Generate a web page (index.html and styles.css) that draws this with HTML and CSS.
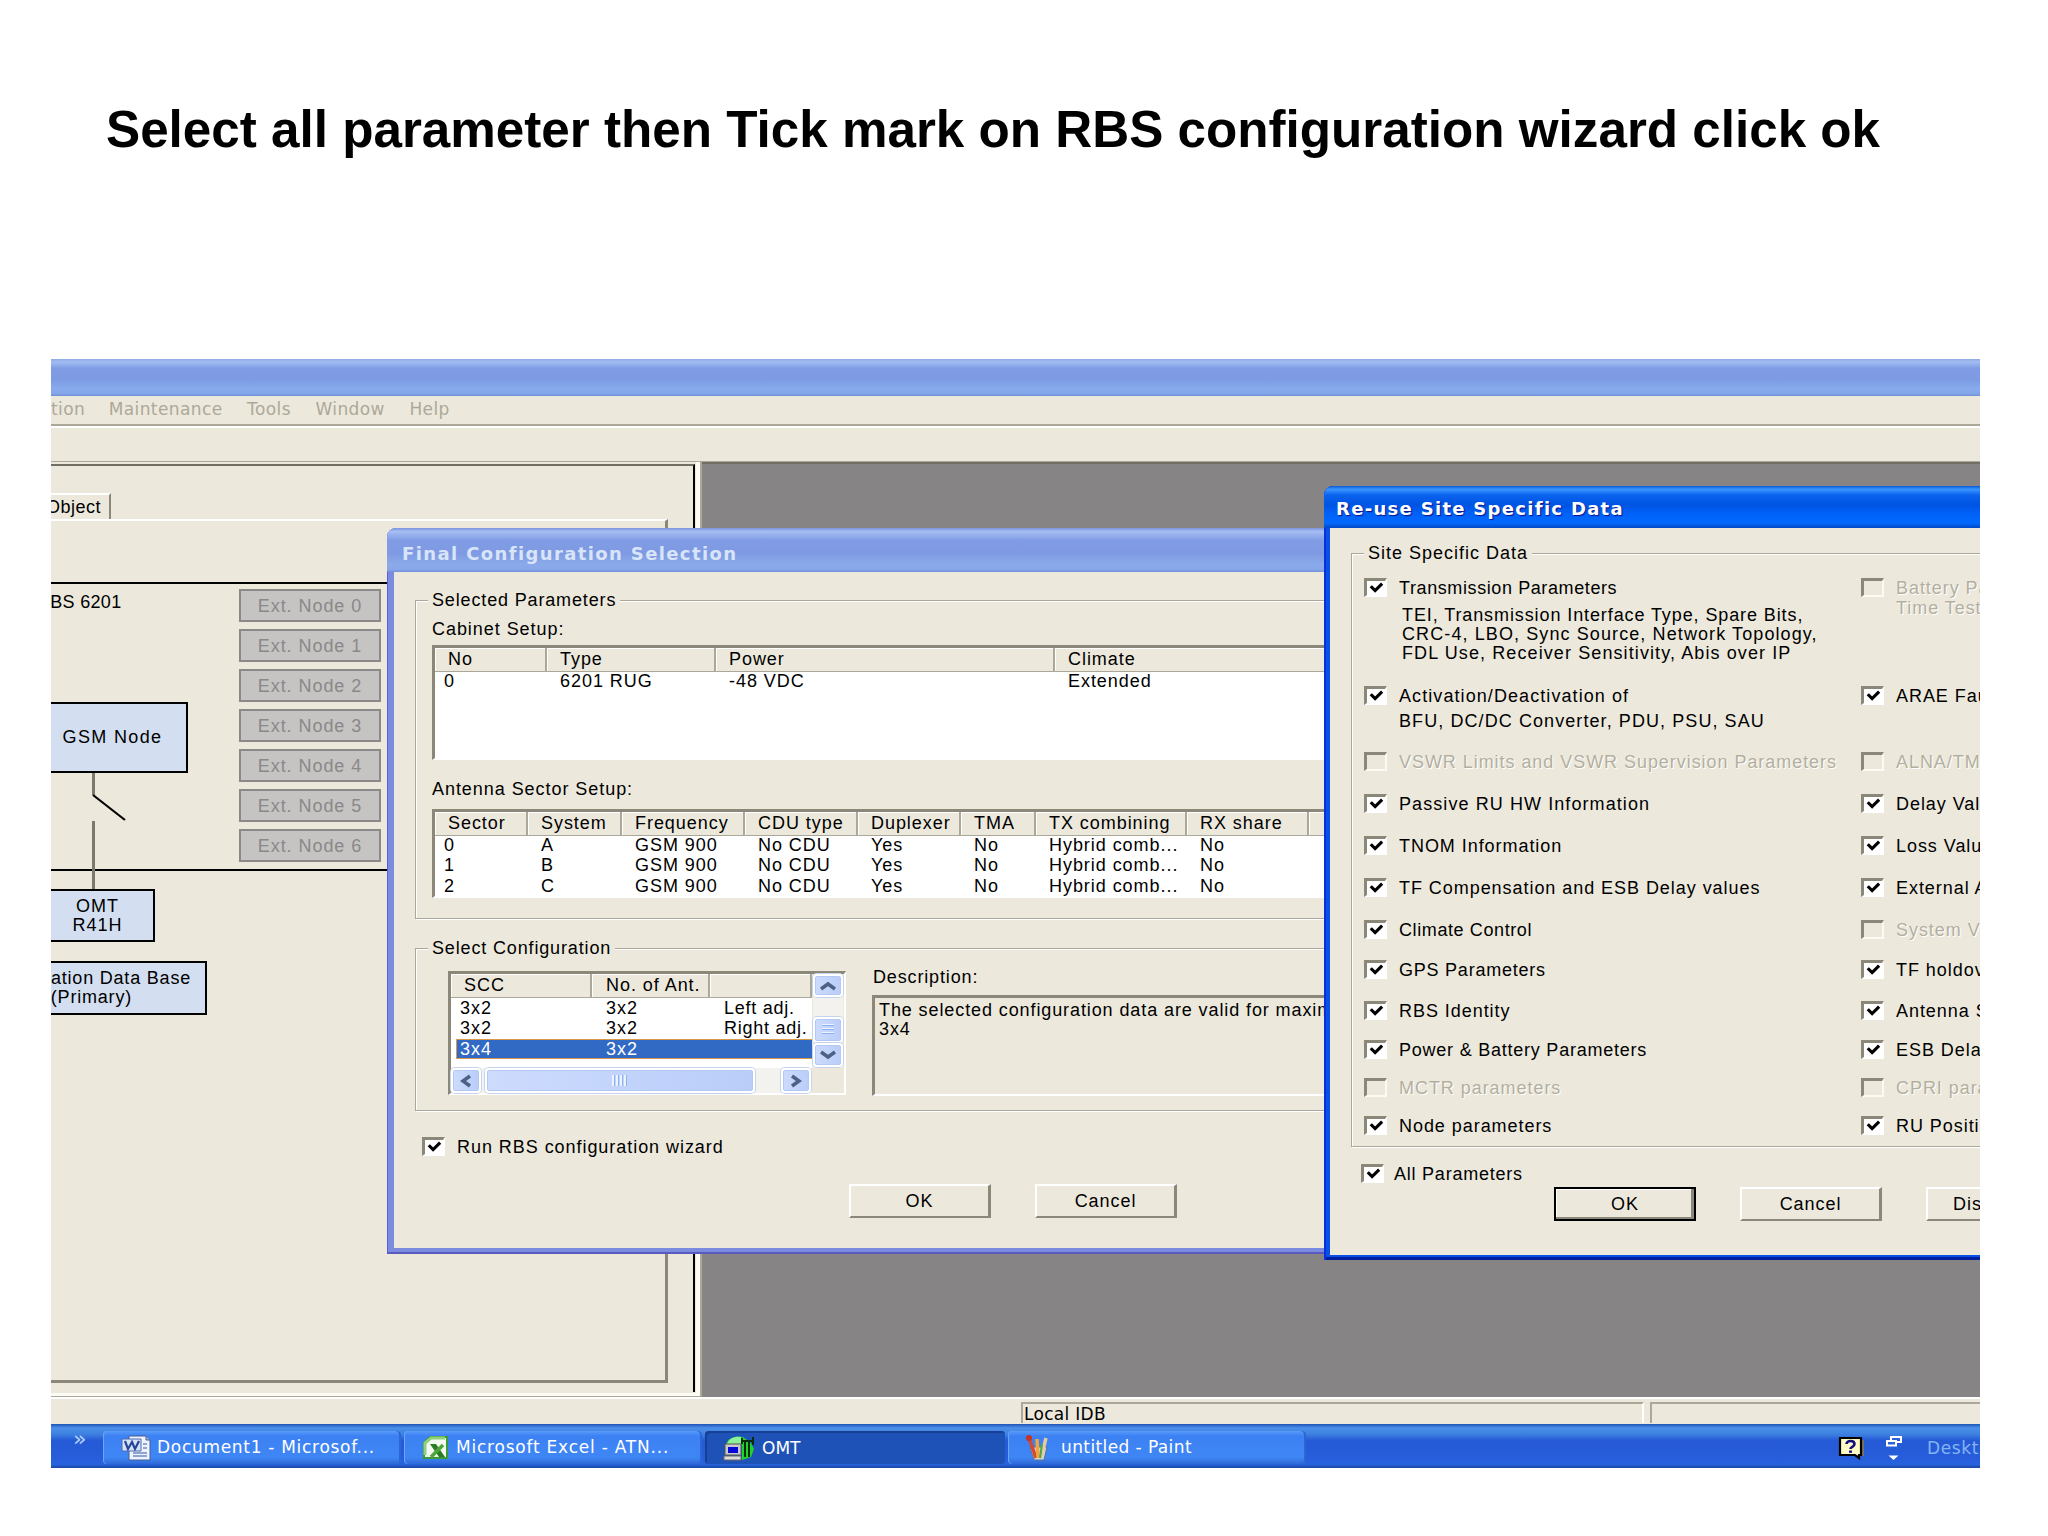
FILE: index.html
```
<!DOCTYPE html>
<html lang="en">

<head>
    <meta charset="UTF-8">
    <meta name="viewport" content="width=device-width, initial-scale=1.0">
    <title>RBS configuration wizard</title>
    <link rel="stylesheet" href="styles.css">
</head>

<body>
    <svg class="defs" width="0" height="0">
        <symbol id="tick" viewBox="0 0 20 16">
            <path d="M4 6l5 5 8-8" fill="none" stroke="#000" stroke-width="3.6" />
        </symbol>
    </svg>
    <h1>Select all parameter then Tick mark on RBS configuration wizard click ok</h1>
    <div class="screen">
        <div class="app-title"></div>
        <div class="menubar">
            <span>tion</span><span>Maintenance</span><span>Tools</span><span>Window</span><span>Help</span>
        </div>
        <div class="toolbar"></div>
        <div class="workspace">
            <div class="side">
                <div class="side-inner">
                    <div class="tab"><span>Object</span></div>
                    <div class="tab-page"></div>
                </div>
                <!-- node diagram -->
                <div class="diagram">
                    <div class="rack"></div>
                    <span class="rack-name">RBS 6201</span>
                    <div class="ext-nodes">
                        <div>Ext. Node 0</div>
                        <div>Ext. Node 1</div>
                        <div>Ext. Node 2</div>
                        <div>Ext. Node 3</div>
                        <div>Ext. Node 4</div>
                        <div>Ext. Node 5</div>
                        <div>Ext. Node 6</div>
                    </div>
                    <svg class="wire" width="60" height="120" viewBox="0 0 60 120">
                        <path d="M14.500 0V22M14.500 48V120" stroke="#7d796c" stroke-width="3" />
                        <path d="M14 22L46 47" stroke="#000" stroke-width="2.200" />
                    </svg>
                    <div class="node gsm">GSM Node</div>
                    <div class="node omt">OMT<br>R41H</div>
                    <div class="node idb">ation Data Base<br><span>(Primary)</span></div>
                </div>
            </div>
            <div class="mdi"></div>
        </div>
        <div class="statusbar">
            <div class="field">Local IDB</div>
            <div class="field last"></div>
        </div>
        <div class="taskbar">
            <span class="more">»</span>
            <div class="task">
                <svg width="30" height="26" viewBox="0 0 30 26">
                    <path d="M8 1h17l4 4v20H8z" fill="#eef3fb" stroke="#445f95" />
                    <path d="M25 1v4h4" fill="#9db4dc" stroke="#445f95" />
                    <path d="M22 9h4M22 13h4M12 18h14M12 21h14" stroke="#6f8cc4" stroke-width="1.500" />
                    <path d="M1 4h19v12H1z" fill="#d6e2f6" stroke="#4a6cb2" />
                    <path d="M4 6l3 8 4-7 3 7 4-8" fill="none" stroke="#24479b" stroke-width="2.200" />
                </svg>
                <span class="t-word">Document1 - Microsof...</span>
            </div>
            <div class="task">
                <svg width="28" height="26" viewBox="0 0 28 26">
                    <path d="M8 2h17v21H2V8z" fill="#f4faf0" stroke="#3a9a36" stroke-width="2" />
                    <path d="M3 20V8l6-5h14" fill="none" stroke="#8fd07a" stroke-width="3" />
                    <path d="M8 9h6l9 13h-6z" fill="#2b7d25" />
                    <path d="M21 10L9 22" stroke="#4ca63c" stroke-width="3.500" />
                </svg>
                <span class="t-excel">Microsoft Excel - ATN...</span>
            </div>
            <div class="task active">
                <svg width="33" height="26" viewBox="0 0 33 26">
                    <path d="M3 10C5 2 12 1 20 2l8 6 3 6-3 8-9 3V10z" fill="#1fd32c" />
                    <path d="M4 9C6 3 12 1 18 2v7z" fill="#8df09a" />
                    <path d="M2 9h16v11H2z" fill="#c9c9c9" stroke="#555" />
                    <path d="M5 12h10v6H5z" fill="#0707d8" />
                    <path d="M1 21h17v4H1z" fill="#dcdcdc" stroke="#666" />
                    <path d="M19 6h12M19 3v6M30 2v8M22 6v16M26 6v16" stroke="#0b2b0d" stroke-width="2" />
                </svg>
                <span class="t-omt">OMT</span>
            </div>
            <div class="task">
                <svg width="24" height="26" viewBox="0 0 24 26">
                    <path d="M4 12h17l-3 13H8z" fill="#c9d8e6" stroke="#5d6f8d" />
                    <path d="M3 3l7 20" stroke="#d9482e" stroke-width="3.500" />
                    <path d="M11 4l1 19" stroke="#f4a53a" stroke-width="3.500" />
                    <path d="M20 3l-5 20" stroke="#e9c9a0" stroke-width="3.500" />
                    <path d="M16 9l-2 14" stroke="#4ea84a" stroke-width="2" />
                    <circle cx="3" cy="3" r="3" fill="#c8321f" />
                </svg>
                <span class="t-paint">untitled - Paint</span>
            </div>
            <div class="tray">
                <svg width="27" height="24" viewBox="0 0 27 24">
                    <path d="M5 4h21v16H5z" fill="#77735c" />
                    <path d="M2 2h21v17h-2v3l-4-3H2z" fill="#fffbc4" stroke="#000" stroke-width="2.200" />
                    <path d="M8.500 8c0-4 8-4 8 0 0 3-4 2.500-4 5" fill="none" stroke="#10107c" stroke-width="2.600" />
                    <path d="M11 14.500h3v2.300h-3z" fill="#10107c" />
                </svg>
                <svg width="18" height="26" viewBox="0 0 18 26">
                    <path d="M6 2h10v5H6z" fill="none" stroke="#fff" stroke-width="2" />
                    <path d="M2 6h9v4.500H2z" fill="#2b62dc" stroke="#fff" stroke-width="2" />
                    <path d="M3.500 20.500h10l-5 4.500z" fill="#fff" />
                </svg>
                <span>Desktop</span>
            </div>
        </div>

        <!-- Final Configuration Selection -->
        <div class="window final">
            <div class="window-title">Final Configuration Selection</div>
            <div class="window-body">
                <fieldset class="selected">
                    <legend>Selected Parameters</legend>
                    <p class="label">Cabinet Setup:</p>
                    <div class="list cabinet">
                        <div class="row head"><span>No</span><span>Type</span><span>Power</span><span>Climate</span></div>
                        <div class="row"><span>0</span><span>6201 RUG</span><span>-48 VDC</span><span>Extended</span></div>
                    </div>
                    <p class="label antenna-label">Antenna Sector Setup:</p>
                    <div class="list antenna">
                        <div class="row head"><span>Sector</span><span>System</span><span>Frequency</span><span>CDU type</span><span>Duplexer</span><span>TMA</span><span>TX combining</span><span>RX share</span><span></span></div>
                        <div class="row"><span>0</span><span>A</span><span>GSM 900</span><span>No CDU</span><span>Yes</span><span>No</span><span>Hybrid comb...</span><span>No</span></div>
                        <div class="row"><span>1</span><span>B</span><span>GSM 900</span><span>No CDU</span><span>Yes</span><span>No</span><span>Hybrid comb...</span><span>No</span></div>
                        <div class="row"><span>2</span><span>C</span><span>GSM 900</span><span>No CDU</span><span>Yes</span><span>No</span><span>Hybrid comb...</span><span>No</span></div>
                    </div>
                </fieldset>
                <fieldset class="select-conf">
                    <legend>Select Configuration</legend>
                    <div class="conf-cols">
                        <div class="list scc">
                            <div class="scc-rows">
                                <div class="row head"><span>SCC</span><span>No. of Ant.</span><span></span></div>
                                <div class="row"><span>3x2</span><span>3x2</span><span>Left adj.</span></div>
                                <div class="row"><span>3x2</span><span>3x2</span><span>Right adj.</span></div>
                                <div class="row current"><span>3x4</span><span>3x2</span><span></span></div>
                            </div>
                            <div class="vscroll">
                                <div class="sb up"><svg width="16" height="10" viewBox="0 0 16 10"><path d="M1 8l7-5 7 5" /></svg></div>
                                <div class="sb vthumb"><i></i></div>
                                <div class="sb down"><svg width="16" height="10" viewBox="0 0 16 10"><path d="M1 2l7 5 7-5" /></svg></div>
                            </div>
                            <div class="hscroll">
                                <div class="sb left"><svg width="12" height="14" viewBox="0 0 12 14"><path d="M10 2L3 7l7 5" /></svg></div>
                                <div class="sb hthumb"><i></i></div>
                                <div class="sb right"><svg width="12" height="14" viewBox="0 0 12 14"><path d="M2 2l7 5-7 5" /></svg></div>
                            </div>
                        </div>
                        <div class="description">
                            <p class="label">Description:</p>
                            <div class="text">The selected configuration data are valid for maxim<br>3x4</div>
                        </div>
                    </div>
                </fieldset>
                <div class="check-row run"><span class="box"><svg><use href="#tick" /></svg></span>Run RBS configuration wizard</div>
                <div class="buttons"><div class="btn">OK</div><div class="btn">Cancel</div></div>
            </div>
        </div>

        <!-- Re-use Site Specific Data -->
        <div class="window reuse">
            <div class="window-title">Re-use Site Specific Data</div>
            <div class="window-body">
                <fieldset class="site">
                    <legend>Site Specific Data</legend>
                    <div class="params">
                        <div class="check-row"><span class="box"><svg><use href="#tick" /></svg></span>
                            <div><span class="tight">Transmission Parameters</span>
                                <p class="sub">TEI, Transmission Interface Type, Spare Bits,<br><span>CRC-4, LBO, Sync Source, Network Topology,<br>FDL Use, Receiver Sensitivity, Abis over IP</span></p>
                            </div>
                        </div>
                        <div class="check-row off"><span class="box"></span><div>Battery Pa<br>Time Test</div></div>
                        <div class="check-row"><span class="box"><svg><use href="#tick" /></svg></span>
                            <div class="wide">Activation/Deactivation of<p class="units">BFU, DC/DC Converter, PDU, PSU, SAU</p></div>
                        </div>
                        <div class="check-row"><span class="box"><svg><use href="#tick" /></svg></span>ARAE Fau</div>
                        <div class="check-row off"><span class="box"></span>VSWR Limits and VSWR Supervision Parameters</div>
                        <div class="check-row off"><span class="box"></span>ALNA/TM</div>
                        <div class="check-row"><span class="box"><svg><use href="#tick" /></svg></span><span class="wide">Passive RU HW Information</span></div>
                        <div class="check-row"><span class="box"><svg><use href="#tick" /></svg></span>Delay Val</div>
                        <div class="check-row"><span class="box"><svg><use href="#tick" /></svg></span>TNOM Information</div>
                        <div class="check-row"><span class="box"><svg><use href="#tick" /></svg></span>Loss Valu</div>
                        <div class="check-row"><span class="box"><svg><use href="#tick" /></svg></span>TF Compensation and ESB Delay values</div>
                        <div class="check-row"><span class="box"><svg><use href="#tick" /></svg></span>External A</div>
                        <div class="check-row"><span class="box"><svg><use href="#tick" /></svg></span><span class="tight">Climate Control</span></div>
                        <div class="check-row off"><span class="box"></span>System Vo</div>
                        <div class="check-row"><span class="box"><svg><use href="#tick" /></svg></span><span class="mid">GPS Parameters</span></div>
                        <div class="check-row"><span class="box"><svg><use href="#tick" /></svg></span>TF holdov</div>
                        <div class="check-row"><span class="box"><svg><use href="#tick" /></svg></span>RBS Identity</div>
                        <div class="check-row"><span class="box"><svg><use href="#tick" /></svg></span>Antenna S</div>
                        <div class="check-row"><span class="box"><svg><use href="#tick" /></svg></span><span class="mid">Power &amp; Battery Parameters</span></div>
                        <div class="check-row"><span class="box"><svg><use href="#tick" /></svg></span>ESB Dela</div>
                        <div class="check-row off"><span class="box"></span>MCTR parameters</div>
                        <div class="check-row off"><span class="box"></span>CPRI para</div>
                        <div class="check-row"><span class="box"><svg><use href="#tick" /></svg></span>Node parameters</div>
                        <div class="check-row"><span class="box"><svg><use href="#tick" /></svg></span>RU Positi</div>
                    </div>
                </fieldset>
                <div class="check-row all"><span class="box"><svg><use href="#tick" /></svg></span><span class="mid">All Parameters</span></div>
                <div class="buttons"><div class="btn default">OK</div><div class="btn">Cancel</div><div class="btn cut">Dis</div></div>
            </div>
        </div>
    </div>
</body>

</html>
```
FILE: styles.css
```
* {
    margin: 0;
    padding: 0;
    box-sizing: border-box;
}

body {
    width: 2048px;
    height: 1536px;
    overflow: hidden;
    background: #fff;
    font: 18px/20px "Liberation Sans", Arial, sans-serif;
    letter-spacing: .95px;
    color: #000;
    white-space: nowrap;
}

.defs {
    display: block;
}

h1 {
    height: 359px;
    padding: 100px 0 0 106px;
    font-size: 51.2px;
    line-height: 60px;
    letter-spacing: 0;
}

.screen {
    position: relative;
    display: flex;
    flex-direction: column;
    width: 1929px;
    height: 1109px;
    margin-left: 51px;
    overflow: hidden;
    background: #ece9dc;
}

.app-title {
    height: 37px;
    background: linear-gradient(#8fa9e4, #a2bdf2 8%, #7f9ce4 25%, #7d9ae2 55%, #87abec 80%, #84a6e8 94%, #6d8cd8);
}

.menubar {
    display: flex;
    gap: 24.5px;
    height: 30px;
    padding-top: 3px;
    border-bottom: 2px solid #aca899;
    font: 17px/20px "DejaVu Sans", Verdana, sans-serif;
    letter-spacing: .4px;
    color: #aca899;
}

.menubar span:first-child {
    margin-right: -1px;
}

.toolbar {
    height: 36px;
    border-top: 2px solid #fff;
    border-bottom: 1px solid #aca899;
}

.workspace {
    display: flex;
    height: 937px;
    border-bottom: 2px solid #fff;
}

.side {
    position: relative;
    width: 651px;
    padding-top: 2px;
    border-right: 2px solid #aca899;
    border-bottom: 1px solid #aca899;
    background: #ece9dc;
    box-shadow: inset -4px -3px 0 #fcfbf4;
}

.side-inner {
    width: 644px;
    height: 928px;
    padding-top: 27px;
    border-top: 2px solid #716f64;
    border-right: 2px solid #000;
}

.tab {
    display: flex;
    justify-content: flex-end;
    width: 60px;
    height: 26px;
    padding: 2px 8px 0 0;
    border-top: 2px solid #fff;
    border-right: 2px solid #8b887a;
    overflow: hidden;
    letter-spacing: .5px;
}

.tab-page {
    width: 617px;
    height: 864px;
    border-top: 2px solid #fff;
    border-right: 3px solid #8b887a;
    border-bottom: 3px solid #8b887a;
}

.mdi {
    flex: 1;
    border-top: 2px solid #716f64;
    background: #868484;
}

.diagram {
    position: absolute;
    left: 0;
    top: 1px;
}

.rack {
    position: absolute;
    left: 0;
    top: 119px;
    width: 360px;
    height: 289px;
    border-top: 2px solid #000;
    border-bottom: 2px solid #000;
}

.rack-name {
    position: absolute;
    left: -14px;
    top: 129px;
    letter-spacing: .3px;
}

.ext-nodes {
    position: absolute;
    left: 188px;
    top: 126px;
    display: flex;
    flex-direction: column;
    gap: 7px;
}

.ext-nodes div {
    width: 142px;
    height: 33px;
    border: 2px solid #8a8888;
    background: #c6c3c3;
    color: #8a8888;
    line-height: 31px;
    text-align: center;
}

.wire {
    position: absolute;
    left: 28px;
    top: 310px;
}

.node {
    position: absolute;
    display: flex;
    align-items: center;
    justify-content: center;
    border: 2px solid #000;
    background: #d3dff0;
    line-height: 19px;
    text-align: center;
}

.gsm {
    left: -14px;
    top: 239px;
    width: 151px;
    height: 71px;
    letter-spacing: 1.35px;
}

.omt {
    left: -11px;
    top: 426px;
    width: 115px;
    height: 53px;
}

.idb {
    left: -7px;
    top: 498px;
    width: 163px;
    height: 54px;
    display: block;
    padding: 6px 14px 0 0;
    text-align: right;
    letter-spacing: .8px;
}

.idb span {
    margin-right: 59px;
}

.statusbar {
    display: flex;
    gap: 6px;
    height: 25px;
    padding: 3px 0 0 970px;
}

.field {
    flex: none;
    width: 623px;
    height: 21px;
    padding-left: 1px;
    border-top: 2px solid #aca899;
    border-left: 2px solid #aca899;
    border-right: 2px solid #fff;
    font: 17px/20px "DejaVu Sans", Verdana, sans-serif;
    letter-spacing: .3px;
}

.field.last {
    width: 340px;
}

.taskbar {
    display: flex;
    height: 44px;
    padding: 7px 0 4px;
    background: linear-gradient(#1f55b8, #4b8fe9 9%, #3f83e2 22%, #2559d6 38%, #285edb 80%, #2763dd 92%, #1b469f);
    font: 17px/32px "DejaVu Sans", Verdana, sans-serif;
    color: #fff;
}

.more {
    flex: none;
    width: 52px;
    padding-left: 22px;
    font-size: 22px;
    line-height: 16px;
    color: #b5d2fa;
}

.task {
    display: flex;
    flex: none;
    align-items: center;
    gap: 6px;
    width: 298px;
    margin-right: 3px;
    padding-left: 18px;
    border-radius: 4px;
    background: linear-gradient(#5a9bfa, #3c81f3 15%, #3f86f5 80%, #3069d8);
    box-shadow: inset 1px 0 0 #6aa5fa, inset -2px 0 0 #2c66d4;
}

.task span {
    padding-bottom: 1px;
}

.task.active {
    width: 300px;
    background: #1e52b7;
    box-shadow: inset 2px 2px 0 #173f93;
}

.t-word {
    letter-spacing: .7px;
}

.t-excel {
    letter-spacing: .78px;
}

.task .t-omt {
    padding: 1px 0 0;
    letter-spacing: 0;
}

.t-paint {
    margin-left: 5px;
    letter-spacing: .4px;
}

.tray {
    display: flex;
    flex: none;
    align-items: center;
    gap: 20px;
    margin-left: 529px;
    color: #83b4f4;
}

.tray span {
    margin-left: 4px;
    letter-spacing: .6px;
}

/* windows */
.window {
    position: absolute;
    border-radius: 9px 9px 0 0;
    overflow: hidden;
}

.window-title {
    height: 44px;
    padding-left: 15px;
    font: bold 18px/52px "DejaVu Sans", Verdana, sans-serif;
    letter-spacing: 1.38px;
}

.window-body {
    background: #ece9dc;
}

.final {
    left: 336px;
    top: 169px;
    width: 1000px;
    height: 726px;
    background: #7b8be0;
    box-shadow: inset 1px 0 0 #5a5fd0, inset 0 -2px 0 #5a59bd;
}

.final .window-title {
    background: linear-gradient(#7b93dc, #a6bef3 8%, #809ce4 28%, #7f9ae2 58%, #8aaaea 82%, #88a6e8 94%, #7191dc);
    color: #d8e4f8;
}

.final .window-body {
    height: 676px;
    margin: 0 7px;
    padding: 18px 0 0 21px;
}

fieldset {
    width: 1100px;
    padding-left: 12px;
    border: 1px solid #aca899;
    box-shadow: 1px 1px 0 #fff, inset 1px 1px 0 #fff;
}

legend {
    height: 20px;
    padding: 0 4px;
    background: #ece9dc;
    line-height: 21px;
    letter-spacing: .85px;
}

.selected {
    height: 329px;
}

.label {
    height: 20px;
    margin-left: 4px;
}

.selected .label {
    margin-top: 9px;
}

.selected .antenna-label {
    margin-top: 19px;
}

.list {
    margin-left: 4px;
    border: 2px solid #fff;
    border-top: 3px solid #8b887a;
    border-left: 3px solid #8b887a;
    background: #fff;
}

.row {
    display: grid;
    height: 20.3px;
    line-height: 20.3px;
}

.row span {
    padding-left: 13px;
}

.row span:first-child {
    padding-left: 9px;
}

.head {
    height: 23px;
    line-height: 23px;
    background: #ece9dc;
}

.head span,
.head span:first-child {
    padding-left: 13px;
    border-right: 2px solid #aca899;
    border-bottom: 1px solid #aca899;
    box-shadow: inset 1px 1px 0 #fff;
}

.cabinet {
    height: 115px;
    margin-top: 6px;
}

.cabinet .row {
    grid-template-columns: 112px 169px 339px 1fr;
}

.antenna {
    height: 89px;
    margin-top: 10px;
}

.antenna .row {
    grid-template-columns: 93px 94px 123px 113px 103px 75px 151px 122px 1fr;
}

.select-conf {
    height: 173px;
    margin-top: 19px;
}

.conf-cols {
    display: flex;
    gap: 26px;
    padding-top: 13px;
}

.scc {
    display: grid;
    grid-template-columns: 361px 1fr;
    grid-template-rows: 94px 1fr;
    width: 398px;
    height: 124px;
    margin-left: 20px;
    background: #ece9dc;
}

.scc-rows {
    background: #fff;
}

.scc .row {
    grid-template-columns: 141px 118px 102px;
}

.scc .head + .row {
    margin-top: 1px;
}

.scc .row span {
    padding-left: 14px;
}

.scc .row span:first-child {
    padding-left: 9px;
}

.scc .row span:last-child {
    letter-spacing: .75px;
}

.scc .head span:first-child {
    padding-left: 13px;
}

.scc .row.current {
    position: relative;
    color: #fff;
    background: linear-gradient(#316ac5, #316ac5) no-repeat 5px 0;
}

.current::after {
    content: "";
    position: absolute;
    left: 5px;
    top: 0;
    right: 0;
    bottom: 0;
    border: 1px solid #d89a4a;
    border-right: 0;
}

.sb {
    display: flex;
    align-items: center;
    justify-content: center;
    border: 2px solid #fff;
    border-radius: 4px;
    background: linear-gradient(90deg, #cddbfd, #b9cdf9);
    box-shadow: inset 0 0 0 1px #b4c8f4, 0 0 0 1px #c5d3ee;
}

.sb path {
    fill: none;
    stroke: #4d6185;
    stroke-width: 3.6;
}

.vscroll {
    display: flex;
    flex-direction: column;
    width: 30px;
    margin-left: 1px;
    background: #f3f2ee;
}

.up {
    height: 23px;
}

.vthumb {
    height: 26px;
    margin-top: 20px;
}

.down {
    height: 24px;
}

.vthumb i {
    width: 12px;
    height: 12px;
    background: repeating-linear-gradient(#eef4fe 0 1px, #8cb0f8 1px 2px, transparent 2px 4px);
}

.hscroll {
    display: flex;
    height: 25px;
    background: #f3f2ee;
}

.left,
.right {
    width: 30px;
}

.hthumb {
    width: 270px;
    margin: 0 26px 0 4px;
}

.hthumb i {
    width: 16px;
    height: 11px;
    background: repeating-linear-gradient(90deg, #eef4fe 0 2px, #8cb0f8 2px 3px, transparent 3px 4px);
}

.description .label {
    height: 24px;
    margin-left: 1px;
    line-height: 12px;
    letter-spacing: .85px;
}

.description .text {
    width: 700px;
    height: 101px;
    padding: 3px 4px;
    border: 2px solid #fff;
    border-top: 3px solid #8b887a;
    border-left: 3px solid #8b887a;
    line-height: 19px;
    letter-spacing: .9px;
}

.check-row {
    display: flex;
    align-items: flex-start;
    gap: 12px;
}

.box {
    flex: none;
    width: 23px;
    height: 19px;
    border: 2px solid #fff;
    border-top: 3px solid #8b887a;
    border-left: 3px solid #8b887a;
    background: #fff;
}

.box svg {
    display: block;
    width: 18px;
    height: 14px;
}

.off {
    color: #b3af9f;
    text-shadow: 1px 1px 0 #fff;
}

.off .box {
    background: #ece9dc;
    border-color: #8b887a #fbfaf3 #fbfaf3 #8b887a;
}

.run {
    margin: 26px 0 0 7px;
}

.buttons {
    display: flex;
    gap: 44px;
}

.final .buttons {
    margin: 27px 0 0 434px;
}

.btn {
    width: 142px;
    height: 34px;
    border: 2px solid #fff;
    border-right: 3px solid #8b887a;
    border-bottom: 2px solid #8b887a;
    line-height: 30px;
    text-align: center;
}

.btn.default {
    border: 2px solid #000;
    box-shadow: inset -3px -2px 0 #8b887a, inset 1px 1px 0 #fff;
}

.btn.cut {
    padding-left: 25px;
    text-align: left;
}

.reuse {
    left: 1273px;
    top: 127px;
    width: 800px;
    height: 774px;
    background: #0a4fe6;
    box-shadow: inset 2px 0 0 #0831d9, inset 0 -3px 0 #001ea0;
}

.reuse .window-title {
    height: 42px;
    padding-left: 12px;
    line-height: 45px;
    letter-spacing: 1.3px;
    background: linear-gradient(#0a5bd8, #3a95fd 8%, #0a62ee 22%, #0054e3 45%, #0061f8 65%, #026afe 88%, #0248c4);
    color: #fff;
    text-shadow: 1px 1px 1px #0f1089;
}

.reuse .window-body {
    height: 727px;
    margin-left: 6px;
    padding: 15px 0 0 21px;
}

.site {
    height: 604px;
}

.site legend {
    letter-spacing: 1px;
}

.params {
    display: grid;
    grid-template-columns: 497px 1fr;
    grid-template-rows: 108px 66px 42px 42px 42px 42px 40px 41px 39px 38px 38px 38px;
    padding-top: 15px;
}

.tight {
    letter-spacing: .6px;
}

.mid {
    letter-spacing: .77px;
}

.wide {
    letter-spacing: 1.08px;
}

.sub {
    margin: 8px 0 0 3px;
    line-height: 18.8px;
    letter-spacing: .9px;
}

.sub span {
    letter-spacing: 1.1px;
}

.units {
    margin-top: 5px;
}

.all {
    gap: 10px;
    margin: 17px 0 0 10px;
}

.reuse .buttons {
    margin: 3px 0 0 203px;
}
```
